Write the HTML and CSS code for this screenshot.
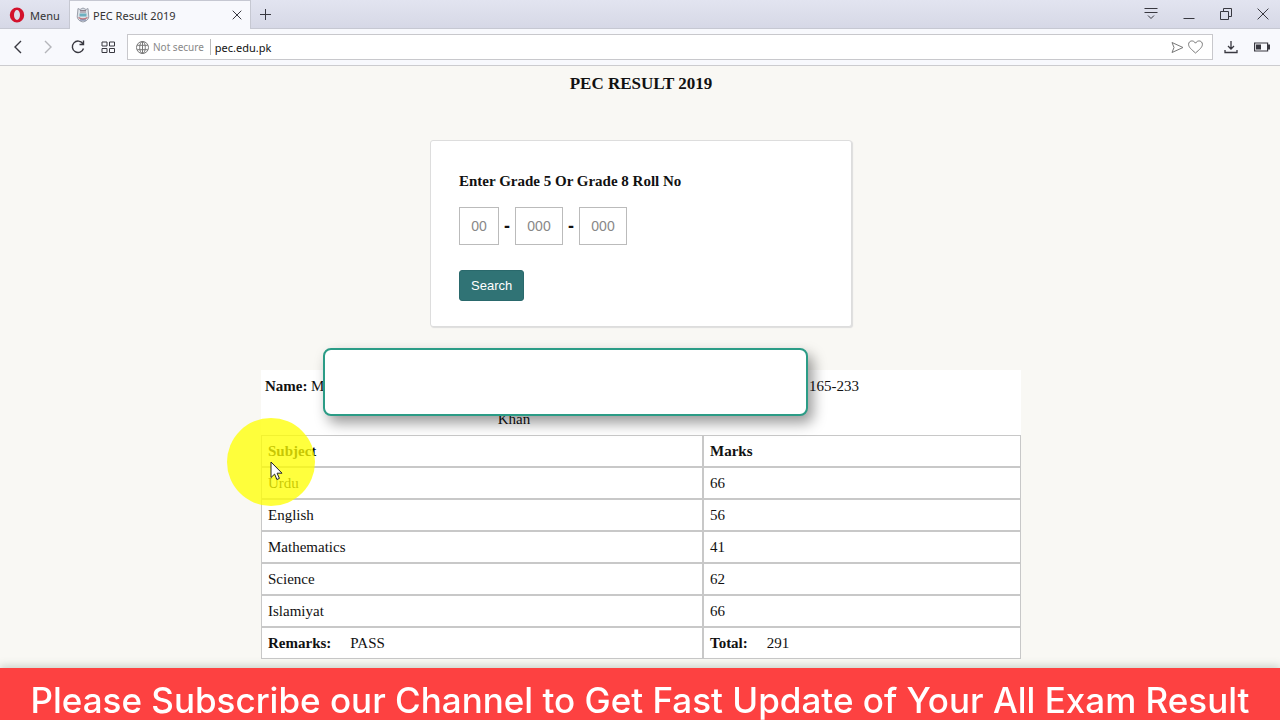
FILE: index.html
```
<!DOCTYPE html>
<html lang="en">
<head>
	<meta charset="utf-8">
	<title>PEC Result 2019</title>
	<link rel="stylesheet" href="styles.css">
</head>
<body>
<!-- browser window -->
<header class="browser">
	<div class="tabs">
		<button type="button" class="menu">
			<svg width="16" height="16" viewBox="0 0 16 16"><path fill="#d3122c" fill-rule="evenodd" d="M8 .6a7.2 7.4 0 1 0 0 14.8A7.2 7.4 0 1 0 8 .6zM8 3a3 5 0 1 1 0 10A3 5 0 1 1 8 3z"/></svg>
			Menu
		</button>
		<div class="tab">
			<svg width="14" height="16" viewBox="0 0 14 16"><path d="M2 1.500l2 1 3-1.500 3 1.500 2-1 .8 8.500Q12 14 7 15 2 14 1.200 10z" fill="#dde2e8" stroke="#9a9faa"/><path d="M4 3.500h6M4 5h6" stroke="#8c7f8c"/><path d="M3.500 6.500h7v3h-7z" fill="#6cb0c0"/><path d="M2.500 10.500q4.500 3 9 0" fill="none" stroke="#c0767d" stroke-width="1.500"/><path d="M4 13h6" stroke="#69759c"/></svg>
			<span>PEC Result 2019</span>
			<button type="button" class="close" aria-label="Close tab">
				<svg width="10" height="10" viewBox="0 0 10 10"><path d="M.7.7l8.600 8.600M9.300.7L.7 9.300"/></svg>
			</button>
		</div>
		<button type="button" class="new-tab" aria-label="New tab">
			<svg width="11" height="11" viewBox="0 0 11 11"><path d="M5.500 0v11M0 5.500h11"/></svg>
		</button>
		<div class="window-buttons">
			<button type="button" aria-label="Tab menu"><svg width="14" height="14" viewBox="0 0 14 14"><path d="M.5 1.500h13M.5 5.500h13M4 8.500l3 3 3-3"/></svg></button>
			<button type="button" aria-label="Minimize"><svg width="12" height="12" viewBox="0 0 12 12"><path d="M.5 10.500h11"/></svg></button>
			<button type="button" aria-label="Restore"><svg width="12" height="12" viewBox="0 0 12 12"><path d="M.5 3.500h8v8h-8zM3.500 3.500v-3h8v8h-3"/></svg></button>
			<button type="button" aria-label="Close"><svg width="12" height="12" viewBox="0 0 12 12"><path d="M.6.6l10.800 10.800M11.400.6L.6 11.400"/></svg></button>
		</div>
	</div>
	<div class="toolbar">
		<button type="button" aria-label="Back"><svg width="14" height="14" viewBox="0 0 14 14"><path d="M10 1L4 7l6 6" stroke-width="1.400"/></svg></button>
		<button type="button" class="off" aria-label="Forward"><svg width="14" height="14" viewBox="0 0 14 14"><path d="M4 1l6 6-6 6" stroke-width="1.400"/></svg></button>
		<button type="button" aria-label="Reload"><svg width="14" height="14" viewBox="0 0 14 14"><path d="M11.800 3.600A5.700 5.700 0 1 0 12.500 8.500M12.500.5v4h-4" stroke-width="1.400"/></svg></button>
		<button type="button" aria-label="Speed dial"><svg width="14" height="14" viewBox="0 0 14 14"><path d="M1 2h5v4H1zM8.500 2h5v4h-5zM1 8.500h5v4H1zM8.500 8.500h5v4h-5z"/></svg></button>
		<div class="address">
			<svg width="13" height="13" viewBox="0 0 13 13"><circle cx="6.500" cy="6.500" r="6"/><ellipse cx="6.500" cy="6.500" rx="2.800" ry="6"/><path d="M1.200 4.300h10.600M1.200 8.700h10.600M6.500.5v12"/></svg>
			<label for="url">Not secure</label>
			<input type="text" id="url" value="pec.edu.pk">
			<svg width="13" height="13" viewBox="0 0 13 13"><path d="M1 1.500l11 5-11 5 2-5z"/></svg>
			<svg width="15" height="14" viewBox="0 0 15 14"><path d="M7.500 13C3.500 9.500.6 7.300.6 4.300.6.7 5.400-.5 7.500 3.200 9.600-.5 14.400.7 14.400 4.300c0 3-2.900 5.200-6.900 8.700z"/></svg>
		</div>
		<button type="button" aria-label="Downloads"><svg width="14" height="14" viewBox="0 0 14 14"><path d="M7 1v8M4 6l3 3 3-3M1 10v2.500h12V10" stroke-width="1.300"/></svg></button>
		<button type="button" aria-label="Battery"><svg width="16" height="10" viewBox="0 0 16 10"><path d="M.6 1h13v8H.6z" stroke-width="1.200"/><rect x="2" y="2.500" width="5" height="5" fill="#383840"/><rect x="14" y="2.500" width="2" height="5" fill="#383840"/></svg></button>
	</div>
</header>

<main>
	<h1>PEC RESULT 2019</h1>
	<form class="search">
		<h2>Enter Grade 5 Or Grade 8 Roll No</h2>
		<div class="roll">
			<input type="text" class="short" placeholder="00" aria-label="Grade">
			<b>-</b>
			<input type="text" placeholder="000" aria-label="Centre">
			<b>-</b>
			<input type="text" placeholder="000" aria-label="Roll number">
		</div>
		<button type="button">Search</button>
	</form>

	<section class="result">
		<div class="student">
			<b>Name:</b>
			<div>M<p>Khan</p></div>
			<span>165-233</span>
		</div>
		<table>
			<tr><th class="subject">Subject</th><th>Marks</th></tr>
			<tr><td>Urdu</td><td>66</td></tr>
			<tr><td>English</td><td>56</td></tr>
			<tr><td>Mathematics</td><td>41</td></tr>
			<tr><td>Science</td><td>62</td></tr>
			<tr><td>Islamiyat</td><td>66</td></tr>
			<tr><td><b>Remarks:</b>PASS</td><td><b>Total:</b>291</td></tr>
		</table>
		<!-- box over the name, pointer with its highlight -->
		<div class="cover"></div>
		<div class="spot"></div>
		<svg class="pointer" width="13" height="20" viewBox="0 0 13 20"><path d="M1 1v15.500l3.600-3.400 2.300 5.400 2.500-1.100-2.300-5.200H12z" fill="#fff" stroke="#222"/></svg>
	</section>
</main>

<footer class="banner">Please Subscribe our Channel to Get Fast Update of Your All Exam Result</footer>
</body>
</html>
```
FILE: styles.css
```
* {
	box-sizing: border-box;
}
body {
	margin: 0;
	height: 100vh;
	overflow: hidden;
	background: #f9f8f4;
	color: #111;
	font: 15px "Liberation Serif", serif;
}
h1, h2, p {
	margin: 0;
}

/* browser window */
.browser {
	font: 11px "Noto Sans", sans-serif;
	color: #333;
}
.browser svg {
	display: block;
	flex: none;
}
.browser button {
	display: flex;
	align-items: center;
	justify-content: center;
	padding: 0;
	border: 0;
	background: none;
	font: inherit;
	color: inherit;
}
.browser button path {
	stroke: #383840;
	fill: none;
}
.browser .menu path {
	stroke: none;
	fill: #d3122c;
}
.tabs {
	display: flex;
	height: 29px;
	background: linear-gradient(#e2e4f0, #d6d8e6);
	border-bottom: 1px solid #c6c8d2;
}
.browser .menu {
	width: 69px;
	gap: 5px;
	padding-top: 2px;
}
.tab {
	display: flex;
	align-items: center;
	gap: 3px;
	width: 182px;
	height: 29px;
	padding: 0 8px 0 6px;
	background: #f8f9fd;
	border: 1px solid #c6c8d2;
	border-bottom: 0;
}
.close {
	margin-left: auto;
}
.new-tab {
	width: 29px;
}
.window-buttons {
	display: flex;
	gap: 25px;
	margin-left: auto;
	padding-right: 11px;
}
.toolbar {
	display: flex;
	align-items: center;
	gap: 16px;
	height: 37px;
	padding: 0 10px 0 11px;
	background: #f8f9fd;
	border-bottom: 1px solid #cccccf;
}
.toolbar .off {
	opacity: .35;
}
.address {
	display: flex;
	flex: 1;
	align-items: center;
	gap: 4px;
	height: 26px;
	margin-left: -4px;
	margin-right: -5px;
	padding: 0 9px 0 8px;
	background: #fff;
	border: 1px solid #c8c8cc;
}
.address svg {
	fill: none;
	stroke: #777;
}
.address label {
	padding-right: 6px;
	border-right: 1px solid #bbb;
	color: #888;
	font-size: 10px;
	line-height: 16px;
}
.address input {
	flex: 1;
	min-width: 0;
	padding: 0;
	border: 0;
	font: 11px "Noto Sans", sans-serif;
	color: #111;
}

/* page */
main {
	padding-left: 2px;
}
h1 {
	margin-top: 8px;
	font-size: 17px;
	line-height: 20px;
	text-align: center;
}
.search {
	width: 422px;
	margin: 46px auto 0;
	padding: 31px 28px 25px;
	background: #fff;
	border: 1px solid #ddd;
	border-radius: 3px;
	box-shadow: 1px 1px 1px #ddd;
}
h2 {
	font-size: 15px;
	line-height: 18px;
}
.roll {
	display: flex;
	align-items: center;
	gap: 5px;
	margin: 17px 0 25px;
	font: 18px/20px "Liberation Sans", sans-serif;
}
.roll input {
	width: 48px;
	height: 38px;
	padding: 0;
	border: 1px solid #bbb;
	font: 14px "Liberation Sans", sans-serif;
	text-align: center;
}
.roll .short {
	width: 40px;
}
.roll input::placeholder {
	color: #888;
}
.search button {
	display: block;
	height: 31px;
	padding: 0 11px;
	border: 1px solid #2a696c;
	border-radius: 3px;
	background: #307375;
	color: #fff;
	font: 13px "Liberation Sans", sans-serif;
}
.result {
	position: relative;
	width: 760px;
	margin: 43px auto 0;
	background: #fff;
}
.student {
	display: grid;
	grid-template-columns: 46px 406px 1fr;
	height: 65px;
	padding-left: 4px;
	line-height: 33px;
}
.student p {
	text-align: center;
}
.student span {
	padding-left: 92px;
}
table {
	width: 100%;
	border-spacing: 0;
}
th, td {
	height: 32px;
	padding: 0 6px;
	border: 1px solid #c8c8c8;
	text-align: left;
}
.subject {
	width: 442px;
}
td b {
	margin-right: 19px;
}
.cover {
	position: absolute;
	top: -22px;
	left: 62px;
	width: 485px;
	height: 68px;
	background: #fff;
	border: 2px solid #2b9c86;
	border-radius: 8px;
	box-shadow: 5px 7px 14px rgba(0, 0, 0, .4);
}
.spot {
	position: absolute;
	top: 48px;
	left: -34px;
	width: 88px;
	height: 88px;
	border-radius: 50%;
	background: rgba(255, 255, 0, .76);
}
.pointer {
	position: absolute;
	top: 91px;
	left: 9px;
}

/* bottom banner lies over the page */
.banner {
	position: fixed;
	left: 0;
	right: 0;
	bottom: 0;
	height: 52px;
	padding-top: 6px;
	background: #fd4141;
	box-shadow: 0 -2px 8px rgba(60, 90, 70, .25);
	color: #fff;
	font: 500 35px/52px Inter, sans-serif;
	text-align: center;
	white-space: nowrap;
}
```
